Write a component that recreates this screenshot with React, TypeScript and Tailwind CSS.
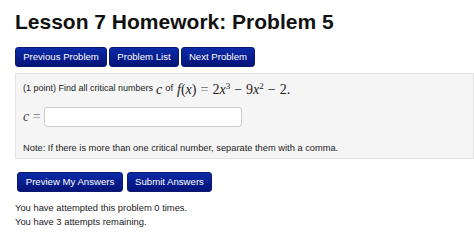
import React from 'react';

const Btn: React.FC<{ label: string; className?: string }> = ({ label, className = '' }) => (
  <button
    className={`h-[20px] whitespace-nowrap rounded-[3px] border border-[#0a1a6e] bg-gradient-to-b from-[#0b2aa8] to-[#06137a] px-0 text-[9.6px] leading-none text-white ${className}`}
  >
    {label}
  </button>
);

const M: React.FC<{ children: React.ReactNode }> = ({ children }) => (
  <span className="font-['Liberation_Serif',serif] text-[14px] italic">{children}</span>
);
const R: React.FC<{ children: React.ReactNode; className?: string }> = ({ children, className = '' }) => (
  <span className={`font-['Liberation_Serif',serif] text-[14px] not-italic ${className}`}>{children}</span>
);

export default function App() {
  return (
    <div className="min-h-[240px] bg-white pl-[15px] font-['Liberation_Sans',Arial,sans-serif] text-[#222]">
      <h1 className="pt-[10px] text-[21px] font-bold leading-[24px] text-[#111]">
        Lesson 7 Homework: Problem 5
      </h1>

      <div className="mt-[13px] flex gap-[2px]">
        <Btn label="Previous Problem" className="w-[92px]" />
        <Btn label="Problem List" className="w-[70px]" />
        <Btn label="Next Problem" className="w-[74px]" />
      </div>

      <div className="mt-[6px] h-[86px] border border-[#e3e3e3] bg-[#f5f5f5] px-[7px] pt-[6px] text-[9.3px]">
        <p className="flex h-[18px] items-center">
          <span className="text-[9px]">(1 point) Find all critical numbers</span>
          <M><span className="ml-[3px]">c</span></M>
          <span className="ml-[3px]">of</span>
          <span className="ml-[4px] flex items-baseline">
            <M>f</M>
            <R>(</R>
            <M>x</M>
            <R>)</R>
            <R className="mx-[4px] text-[#666]">=</R>
            <R>2</R>
            <M>x</M>
            <sup className="font-['Liberation_Serif',serif] text-[9px]">3</sup>
            <R className="mx-[4px]">−</R>
            <R>9</R>
            <M>x</M>
            <sup className="font-['Liberation_Serif',serif] text-[9px]">2</sup>
            <R className="mx-[4px]">−</R>
            <R>2</R>
            <R>.</R>
          </span>
        </p>
        <div className="mt-[8px] flex items-center gap-[3px]">
          <span className="w-[18px] whitespace-nowrap text-[#444]">
            <M>c</M>
            <R className="text-[#777]"> =</R>
          </span>
          <input className="h-[20px] w-[198px] rounded-[3px] border border-[#ccc] bg-white" />
        </div>
        <p className="mt-[15px] leading-[12px]">
          Note: If there is more than one critical number, separate them with a comma.
        </p>
      </div>

      <div className="mt-[13px] flex gap-[4px] pl-[2px]">
        <Btn label="Preview My Answers" className="w-[106px]" />
        <Btn label="Submit Answers" className="w-[85px]" />
      </div>

      <div className="mt-[9px] text-[9.4px] leading-[14px]">
        <p>You have attempted this problem 0 times.</p>
        <p>You have 3 attempts remaining.</p>
      </div>
    </div>
  );
}
